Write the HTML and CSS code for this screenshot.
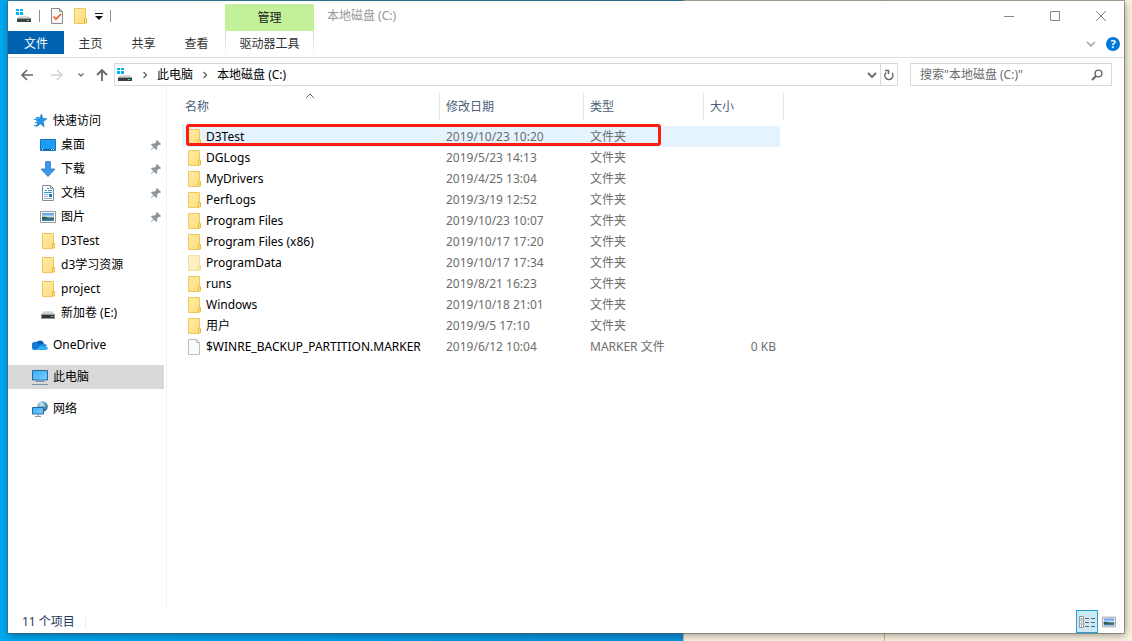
FILE: index.html
```
<!DOCTYPE html>
<html lang="zh-CN">
<head>
<meta charset="utf-8">
<title>本地磁盘 (C:)</title>
<link rel="stylesheet" href="styles.css">
</head>
<body>
<svg class="sprite" aria-hidden="true">
  <defs>
    <linearGradient id="g-folder" x1="0" y1="0" x2="1" y2="1"><stop offset="0" stop-color="#ffeba6"/><stop offset="1" stop-color="#ffdc7c"/></linearGradient>
    <linearGradient id="g-screen" x1="0" y1="0" x2="1" y2="1"><stop offset="0" stop-color="#35abf5"/><stop offset="1" stop-color="#7fd0ff"/></linearGradient>
    <linearGradient id="g-sky" x1="0" y1="0" x2="0" y2="1"><stop offset="0" stop-color="#4f8fe8"/><stop offset=".5" stop-color="#cfe6f8"/><stop offset=".6" stop-color="#3b6f62"/><stop offset="1" stop-color="#4a7fb5"/></linearGradient>
    <linearGradient id="g-drive" x1="0" y1="0" x2="0" y2="1"><stop offset="0" stop-color="#e4e4e4"/><stop offset="1" stop-color="#bdbdbd"/></linearGradient>
    <radialGradient id="g-globe" cx=".35" cy=".3" r=".8"><stop offset="0" stop-color="#c4e6f2"/><stop offset=".5" stop-color="#5f9fb8"/><stop offset="1" stop-color="#285f85"/></radialGradient>
  </defs>
  <symbol id="folder" viewBox="0 0 16 16">
    <path d="M2.500.5h11v10.500h-1v4.500h-10z" fill="url(#g-folder)" stroke="#ecc95a"/>
    <path d="M12.500 15v-4.500h2V15z" fill="#ffe28c" stroke="#e6bb3a"/>
  </symbol>
  <symbol id="file" viewBox="0 0 16 16">
    <path d="M2.500.5h8l3 3v12h-11z" fill="#fafafa" stroke="#bdbdbd"/>
    <path d="M10.500.5v3h3" fill="none" stroke="#bdbdbd"/>
  </symbol>
  <symbol id="winDrive" viewBox="0 0 16 16">
    <path d="M0 1h3v2H0zM4 1h3v2H4zM0 4h3v3H0zM4 4h3v3H4z" fill="#00b4f0"/>
    <path d="M3 8h10l2 3H1z" fill="url(#g-drive)"/>
    <path d="M1 10h14v4H1z" fill="#3d4042"/><path d="M1 10h14v1H1z" fill="#999"/>
    <path d="M11 12h2v1h-2z" fill="#3bf04e"/>
  </symbol>
  <symbol id="drive" viewBox="0 0 16 16">
    <path d="M3.500 6h9L15 10H1z" fill="url(#g-drive)"/>
    <path d="M1 9h14v5H1z" fill="#999"/><path d="M2 10h12v3H2z" fill="#333"/>
    <path d="M11 11h2v1h-2z" fill="#3bf04e"/>
  </symbol>
  <symbol id="checkDoc" viewBox="0 0 16 16">
    <path d="M2.500.5h8l3 3v12h-11z" fill="#f8f8f8" stroke="#8a8a8a"/>
    <path d="M10.500.5v3h3" fill="none" stroke="#8a8a8a"/>
    <path d="M4.500 8.500l2.500 2.500 5-5" fill="none" stroke="#f05a23" stroke-width="1.700"/>
  </symbol>
  <symbol id="quick" viewBox="0 0 16 16">
    <path d="M9.500 1l1.200 4.300 4.300.5-3.700 2.700.9 5.300-3.800-2.900-4.300 3 1.700-5-2.800-3 4.200-.3z" fill="#2196e8" stroke="#1b78bd" stroke-width=".6"/>
    <path d="M4 4.500h3M2 6.500h4M3 9.500h3M2 12.500h2" stroke="#2196e8"/>
  </symbol>
  <symbol id="desktop" viewBox="0 0 16 16">
    <path d="M.5 2.500h15v11H.5z" fill="#1c9cf2" stroke="#1477c4"/>
    <path d="M1 12h14v1H1z" fill="#0e5e9e"/><path d="M2 12h1v1H2zM11 12h1v1h-1zM13 12h1v1h-1z" fill="#fff"/>
  </symbol>
  <symbol id="download" viewBox="0 0 16 16">
    <path d="M5.500.5h5V8h4.500L8 15.500 1 8h4.500z" fill="#3d97e8" stroke="#2b79bf" stroke-width=".8"/>
  </symbol>
  <symbol id="document" viewBox="0 0 16 16">
    <path d="M2.500.5h8l3 3v12h-11z" fill="#fff" stroke="#8b8b8b"/><path d="M10.500.5v3h3" fill="none" stroke="#8b8b8b"/>
    <path d="M5 5.500h2M7 3.500h2M4 7.500h8M8 5.500h4" stroke="#2b97dc"/><path d="M4 9.500h4M4 11.500h4M4 13.500h8" stroke="#8fb0cc"/>
    <path d="M9 9h3v3H9z" fill="#1d78bd"/>
  </symbol>
  <symbol id="picture" viewBox="0 0 16 16">
    <path d="M.5 2.500h15v11H.5z" fill="#fff" stroke="#999"/>
    <path d="M2 4h12v8H2z" fill="url(#g-sky)"/><path d="M2 8q3-1 6 1t6 0v1H2z" fill="#285c4d"/>
  </symbol>
  <symbol id="cloud" viewBox="0 0 16 16">
    <path d="M3 7a5 5 0 0 1 9-1l-3 5H2z" fill="#0a5cb8"/><path d="M0 10.500A3.500 3.500 0 0 1 6 6.500L11 13H3a2.700 2.700 0 0 1-3-2.500z" fill="#1379d3"/>
    <path d="M9 7.500a4 4 0 0 1 6 1.500L10 12 6 9z" fill="#1f8fe4"/><path d="M3 13l6-4 7 1.500A2.500 2.500 0 0 1 13.500 13z" fill="#2fadf3"/>
  </symbol>
  <symbol id="pc" viewBox="0 0 16 16">
    <path d="M.5 1.500h15v9.500H.5z" fill="url(#g-screen)" stroke="#26689a"/>
    <path d="M4 12.500h8M0 15.500h16" stroke="#7894ae"/>
  </symbol>
  <symbol id="network" viewBox="0 0 16 16">
    <circle cx="10.500" cy="5.500" r="5.300" fill="url(#g-globe)"/>
    <path d="M9 2q2 0 2 2l2 1" fill="none" stroke="#d3edf3"/>
    <path d="M.5 6.500h11v6.500H.5z" fill="url(#g-screen)" stroke="#26689a"/>
    <path d="M6 13v2M3 15.500h6" stroke="#7894ae"/>
  </symbol>
  <symbol id="pin" viewBox="0 0 12 12">
    <path d="M7 1l4 4-1 1-1-.3-2 2 .2 2.300-1 1L4 8.700.8 11.300l-.3-.3L3.300 8 1 5.500l1-1 2.300.3 2-2L6 2z" fill="#8b979f"/>
  </symbol>
  <symbol id="crumb" viewBox="0 0 6 8"><path d="M1.500 1l3 3-3 3" fill="none" stroke="#666" stroke-width="1.400"/></symbol>
</svg>

<div class="window">
  <header class="titlebar">
    <div class="quick-bar">
      <svg class="icon"><use href="#winDrive"/></svg>
      <span class="bar"></span>
      <button class="plain" aria-label="属性"><svg class="icon"><use href="#checkDoc"/></svg></button>
      <button class="plain" aria-label="新建文件夹"><svg class="icon"><use href="#folder"/></svg></button>
      <button class="plain" aria-label="自定义快速访问工具栏"><svg class="mini" viewBox="0 0 8 8"><path d="M0 1h8v1H0zM0 4h8L4 8z" fill="#111"/></svg></button>
      <span class="bar"></span>
    </div>
    <div class="context-head">管理</div>
    <h1 class="title">本地磁盘 (C:)</h1>
    <div class="window-buttons">
      <button aria-label="最小化"><svg viewBox="0 0 12 12"><path d="M1 6.500h10"/></svg></button>
      <button aria-label="最大化"><svg viewBox="0 0 12 12"><path d="M1.500 1.500h9v9h-9z"/></svg></button>
      <button aria-label="关闭"><svg viewBox="0 0 12 12"><path d="M1 1l10 10M11 1L1 11"/></svg></button>
    </div>
  </header>

  <nav class="ribbon" aria-label="功能区">
    <button class="tab file-tab">文件</button>
    <button class="tab">主页</button>
    <button class="tab">共享</button>
    <button class="tab">查看</button>
    <button class="tab context-tab">驱动器工具</button>
    <div class="ribbon-end">
      <button class="plain" aria-label="展开功能区"><svg class="chev" viewBox="0 0 10 10"><path d="M1 3l4 4 4-4" fill="none" stroke="#999" stroke-width="1.300"/></svg></button>
      <button class="help" aria-label="帮助">?</button>
    </div>
  </nav>

  <div class="address-row">
    <div class="history">
      <button class="plain" aria-label="后退"><svg class="arrow" viewBox="0 0 14 14"><path d="M13 7H2M7 2L2 7l5 5" fill="none" stroke="#666" stroke-width="1.600"/></svg></button>
      <button class="plain" aria-label="前进"><svg class="arrow" viewBox="0 0 14 14"><path d="M1 7h11M7 2l5 5-5 5" fill="none" stroke="#d4d4d4" stroke-width="1.600"/></svg></button>
      <button class="plain" aria-label="最近位置"><svg class="mini" viewBox="0 0 8 8"><path d="M1.500 2.500L4 5l2.500-2.500" fill="none" stroke="#777" stroke-width="1.500"/></svg></button>
      <button class="plain" aria-label="上移"><svg class="arrow" viewBox="0 0 14 14"><path d="M7 13V2M2 7l5-5 5 5" fill="none" stroke="#666" stroke-width="1.800"/></svg></button>
    </div>
    <div class="address">
      <svg class="icon"><use href="#winDrive"/></svg>
      <svg class="crumb"><use href="#crumb"/></svg>
      <a href="#pc">此电脑</a>
      <svg class="crumb"><use href="#crumb"/></svg>
      <a href="#c">本地磁盘 (C:)</a>
      <button class="plain drop" aria-label="以前的位置"><svg class="chev" viewBox="0 0 10 10"><path d="M1 3l4 4 4-4" fill="none" stroke="#666" stroke-width="1.800"/></svg></button>
      <button class="plain refresh" aria-label="刷新"><svg class="chev" viewBox="0 0 10 12"><path d="M2.200 3.500A4 4 0 1 0 8 4M1 1.500h3.500V5" fill="none" stroke="#666" stroke-width="1.500"/></svg></button>
    </div>
    <form class="search">
      <input type="text" aria-label="搜索" placeholder="搜索&quot;本地磁盘 (C:)&quot;">
      <button class="plain" type="button" aria-label="开始搜索"><svg class="glass" viewBox="0 0 12 12"><circle cx="7.500" cy="4.500" r="3.400" fill="none" stroke="#666" stroke-width="1.400"/><path d="M5 7L1 11" stroke="#666" stroke-width="2"/></svg></button>
    </form>
  </div>

  <div class="content">
    <nav class="sidebar" aria-label="导航窗格">
      <div class="group">
        <a class="root" href="#quick-access"><svg class="icon"><use href="#quick"/></svg>快速访问</a>
        <a href="#desk"><svg class="icon"><use href="#desktop"/></svg>桌面<svg class="pin"><use href="#pin"/></svg></a>
        <a href="#down"><svg class="icon"><use href="#download"/></svg>下载<svg class="pin"><use href="#pin"/></svg></a>
        <a href="#docs"><svg class="icon"><use href="#document"/></svg>文档<svg class="pin"><use href="#pin"/></svg></a>
        <a href="#pics"><svg class="icon"><use href="#picture"/></svg>图片<svg class="pin"><use href="#pin"/></svg></a>
        <a href="#d3test"><svg class="icon"><use href="#folder"/></svg>D3Test</a>
        <a href="#d3"><svg class="icon"><use href="#folder"/></svg>d3学习资源</a>
        <a href="#project"><svg class="icon"><use href="#folder"/></svg>project</a>
        <a href="#e"><svg class="icon"><use href="#drive"/></svg>新加卷 (E:)</a>
      </div>
      <a class="root" href="#onedrive"><svg class="icon"><use href="#cloud"/></svg>OneDrive</a>
      <a class="root current" href="#this-pc"><svg class="icon"><use href="#pc"/></svg>此电脑</a>
      <a class="root" href="#net"><svg class="icon"><use href="#network"/></svg>网络</a>
    </nav>

    <main class="files">
      <table>
        <colgroup><col class="c-name"><col class="c-date"><col class="c-type"><col class="c-size"></colgroup>
        <thead>
          <tr>
            <th scope="col" class="sorted">名称<svg class="sort" viewBox="0 0 10 6"><path d="M1 5l4-4 4 4" fill="none" stroke="#666"/></svg></th>
            <th scope="col">修改日期</th><th scope="col">类型</th><th scope="col">大小</th>
          </tr>
        </thead>
        <tbody>
          <tr class="hover"><td><span class="name"><svg class="icon"><use href="#folder"/></svg>D3Test</span><span class="marker"></span></td><td>2019/10/23 10:20</td><td>文件夹</td><td></td></tr>
          <tr><td><span class="name"><svg class="icon"><use href="#folder"/></svg>DGLogs</span></td><td>2019/5/23 14:13</td><td>文件夹</td><td></td></tr>
          <tr><td><span class="name"><svg class="icon"><use href="#folder"/></svg>MyDrivers</span></td><td>2019/4/25 13:04</td><td>文件夹</td><td></td></tr>
          <tr><td><span class="name"><svg class="icon"><use href="#folder"/></svg>PerfLogs</span></td><td>2019/3/19 12:52</td><td>文件夹</td><td></td></tr>
          <tr><td><span class="name"><svg class="icon"><use href="#folder"/></svg>Program Files</span></td><td>2019/10/23 10:07</td><td>文件夹</td><td></td></tr>
          <tr><td><span class="name"><svg class="icon"><use href="#folder"/></svg>Program Files (x86)</span></td><td>2019/10/17 17:20</td><td>文件夹</td><td></td></tr>
          <tr><td><span class="name"><svg class="icon faded"><use href="#folder"/></svg>ProgramData</span></td><td>2019/10/17 17:34</td><td>文件夹</td><td></td></tr>
          <tr><td><span class="name"><svg class="icon"><use href="#folder"/></svg>runs</span></td><td>2019/8/21 16:23</td><td>文件夹</td><td></td></tr>
          <tr><td><span class="name"><svg class="icon"><use href="#folder"/></svg>Windows</span></td><td>2019/10/18 21:01</td><td>文件夹</td><td></td></tr>
          <tr><td><span class="name"><svg class="icon"><use href="#folder"/></svg>用户</span></td><td>2019/9/5 17:10</td><td>文件夹</td><td></td></tr>
          <tr><td><span class="name"><svg class="icon"><use href="#file"/></svg>$WINRE_BACKUP_PARTITION.MARKER</span></td><td>2019/6/12 10:04</td><td>MARKER 文件</td><td>0 KB</td></tr>
        </tbody>
      </table>
    </main>
  </div>

  <footer class="status">
    <span class="count">11 个项目</span>
    <div class="views">
      <button class="active" aria-label="详细信息"><svg viewBox="0 0 18 16"><path d="M1.500 2.500h4v11h-4zM1.500 6h4M1.500 10h4" fill="#fff" stroke="#999"/><path d="M3 4h1v1H3z" fill="#555"/><path d="M3 7.500h1v1H3z" fill="#27c"/><path d="M3 11.500h1v1H3z" fill="#c22"/><path d="M7 4.500h4M13 4.500h4M7 8.500h4M13 8.500h4M7 12.500h4M13 12.500h4" stroke="#666"/></svg></button>
      <button aria-label="大缩略图"><svg class="thumb" viewBox="0 0 16 16"><use href="#picture"/></svg></button>
    </div>
  </footer>
</div>
</body>
</html>
```
FILE: styles.css
```
* { box-sizing: border-box; }

body {
  margin: 0;
  height: 100vh;
  padding: 1px 8px 8px;
  background:
    linear-gradient(#cdb98a, #cdb98a) 884px 0 / 1px 100% no-repeat,
    linear-gradient(90deg, #00a8f0, #0a92e0 683px, #cdb98a 683px, #cdb98a 684px, #fbf3e0 684px);
  font: 12px/20px "Noto Sans", "Noto Sans CJK SC", sans-serif;
  color: #000;
}

button, input { font: inherit; color: inherit; }
a { color: inherit; text-decoration: none; }
svg { display: block; flex: none; }
.sprite { position: absolute; width: 0; height: 0; }
.icon { width: 16px; height: 16px; }
.chev { width: 10px; height: 12px; }
.mini { width: 8px; height: 8px; }
.glass, .pin { width: 12px; height: 12px; }
.arrow { width: 14px; height: 14px; }

.plain {
  display: flex;
  align-items: center;
  justify-content: center;
  padding: 0;
  border: 0;
  background: none;
}

.window {
  display: flex;
  flex-direction: column;
  height: 100%;
  background: #fff;
  box-shadow: 0 0 0 1px rgba(85, 85, 80, .5), 1px 2px 8px rgba(0, 0, 0, .4);
}

.titlebar { display: flex; height: 30px; }
.quick-bar {
  display: flex;
  align-items: center;
  gap: 7px;
  width: 217px;
  padding-left: 8px;
}
.quick-bar .bar + .plain { margin-left: 2px; }
.bar { width: 1px; height: 12px; background: #8c8c8c; }
.context-head {
  width: 89px;
  margin-top: 3px;
  background: #c2f09b;
  line-height: 27px;
  text-align: center;
  color: #222;
}
.title {
  flex: 1;
  margin: 0;
  padding-left: 13px;
  font-size: 12px;
  font-weight: 400;
  line-height: 30px;
  color: #999;
}
.window-buttons { display: flex; }
.window-buttons button {
  display: flex;
  align-items: center;
  justify-content: center;
  width: 46px;
  padding: 0;
  border: 0;
  background: none;
}
.window-buttons svg { width: 12px; height: 12px; fill: none; stroke: #888; }

.ribbon {
  display: flex;
  height: 27px;
  border-bottom: 1px solid #dadbdc;
}
.tab {
  width: 53px;
  height: 24px;
  padding: 2px 0 0;
  border: 0;
  background: none;
  color: #333;
}
.file-tab { width: 56px; height: 23px; background: #0063b1; color: #fff; }
.context-tab {
  width: 89px;
  margin-left: 2px;
  border: solid;
  border-width: 0 1px;
  border-image: linear-gradient(#d0d0d0, #fff) 1;
}
.ribbon-end {
  display: flex;
  align-items: center;
  gap: 10px;
  margin-left: auto;
  padding-right: 4px;
}
.help {
  width: 14px;
  height: 14px;
  padding: 0;
  border: 0;
  border-radius: 50%;
  background: #0078d7;
  color: #fff;
  font-size: 11px;
  font-weight: 700;
  line-height: 14px;
}

.address-row {
  display: flex;
  height: 28px;
  padding: 5px 12px 0 4px;
}
.history { display: grid; grid-template-columns: 30px 30px 17px 25px; }
.address, .search {
  display: flex;
  align-items: center;
  border: 1px solid #d9d9d9;
}
.address { flex: 1; gap: 9px; padding-left: 2px; line-height: 18px; }
.crumb { width: 6px; height: 8px; }
.drop { width: 16px; margin-left: auto; }
.refresh {
  align-self: stretch;
  width: 17px;
  margin-left: -9px;
  border-left: 1px solid #d9d9d9;
}
.search { width: 202px; margin-left: 12px; padding: 0 8px 0 9px; }
.search input {
  flex: 1;
  min-width: 0;
  padding: 0;
  border: 0;
  outline: 0;
  background: none;
}
.search input::placeholder { color: #6d6d6d; opacity: 1; }

.content { display: flex; flex: 1; min-height: 0; }
.sidebar {
  display: flex;
  flex-direction: column;
  gap: 8px;
  width: 159px;
  padding: 23px 2px 0 0;
  border-right: 1px solid #f2f2f2;
}
.sidebar a {
  display: flex;
  align-items: center;
  gap: 5px;
  height: 24px;
  padding: 0 2px 0 32px;
}
.sidebar a.root { padding-left: 24px; }
.sidebar .current { background: #d9d9d9; }
.pin { margin-left: auto; }

.files { flex: 1; padding: 7px 0 0 15px; }
table { table-layout: fixed; width: 602px; border-collapse: collapse; }
.c-name { width: 258px; }
.c-date { width: 144px; }
.c-type { width: 120px; }
.c-size { width: 80px; }
th {
  height: 27px;
  padding: 0 0 0 6px;
  background: linear-gradient(#e5e5e5, #e5e5e5) right / 1px 100% no-repeat;
  font-weight: 400;
  text-align: left;
  color: #4c607a;
}
th:first-child { padding-left: 3px; }
.sorted { position: relative; }
.sort { position: absolute; top: 0; left: 123px; width: 10px; height: 6px; }
tbody::before { content: ""; display: block; height: 6px; }
td { height: 21px; padding: 0 0 0 6px; color: #6d6d6d; }
td:first-child { position: relative; padding-left: 4px; color: #000; }
td:last-child { padding-right: 8px; text-align: right; }
.name { display: flex; align-items: center; gap: 4px; white-space: nowrap; }
.faded { opacity: .55; }
.hover { background: linear-gradient(#e5f3ff, #e5f3ff) left / 598px 100% no-repeat; }
.marker {
  position: absolute;
  z-index: 1;
  top: -2px;
  left: 4px;
  width: 475px;
  height: 22px;
  border: 3px solid #fc1c10;
  border-radius: 3px;
}

.status {
  display: flex;
  align-items: center;
  height: 23px;
  padding: 0 4px 0 14px;
  color: #1e395b;
}
.count { padding-right: 10px; border-right: 1px solid #eee; line-height: 12px; }
.views { display: flex; margin-left: auto; }
.views button {
  display: flex;
  align-items: center;
  justify-content: center;
  width: 22px;
  height: 23px;
  padding: 0;
  border: 1px solid transparent;
  background: none;
}
.views .active { border-color: #26a0da; background: #cbe8f6; }
.views svg { width: 18px; height: 16px; }
.views .thumb { width: 14px; height: 14px; }
```
